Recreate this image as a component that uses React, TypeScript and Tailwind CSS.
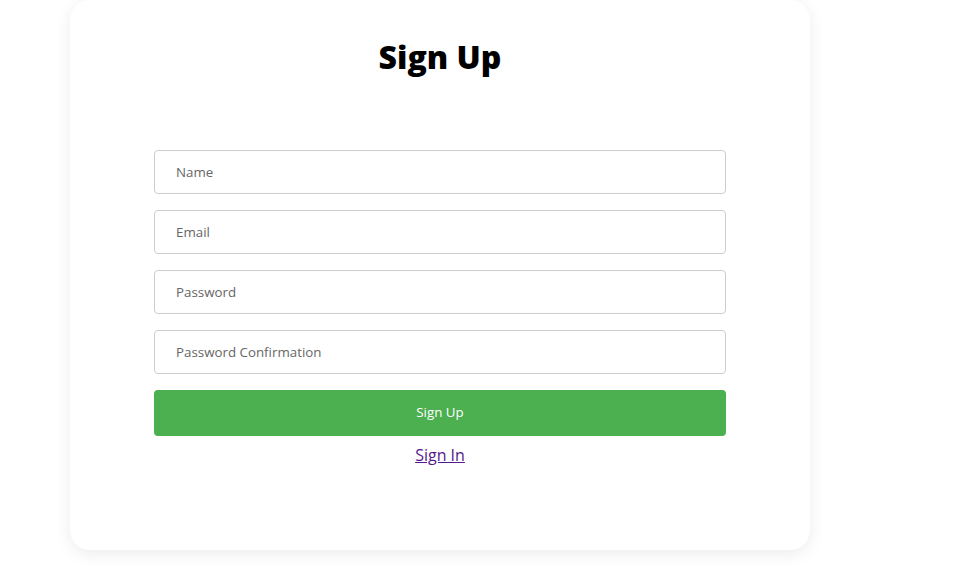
export default function App() {
  const fields = ["Name", "Email", "Password", "Password Confirmation"];
  return (
    <div className="min-h-[587px] bg-white pl-[70px] font-['Open_Sans',sans-serif]">
      <div className="flex h-[550px] w-[740px] flex-col items-center rounded-[20px] bg-white px-[84px] shadow-[0_4px_16px_rgba(0,0,0,0.08)]">
        <h1 className="mt-[37px] text-[32px] leading-[40px] font-extrabold text-black">Sign Up</h1>
        <form className="mt-[73px] flex w-full flex-col gap-4">
          {fields.map((f) => (
            <input
              key={f}
              type={f.startsWith("Password") ? "password" : "text"}
              placeholder={f}
              className="h-[44px] w-full rounded border border-[#ccc] px-[21px] text-[13.33px] text-black outline-none placeholder:text-[#666]"
            />
          ))}
          <button
            type="button"
            className="h-[46px] w-full rounded bg-[#4CAF50] text-[13.33px] text-white"
          >
            Sign Up
          </button>
        </form>
        <a href="#" className="mt-[7px] text-[16px] text-[#551A8B] underline">
          Sign In
        </a>
      </div>
    </div>
  );
}
